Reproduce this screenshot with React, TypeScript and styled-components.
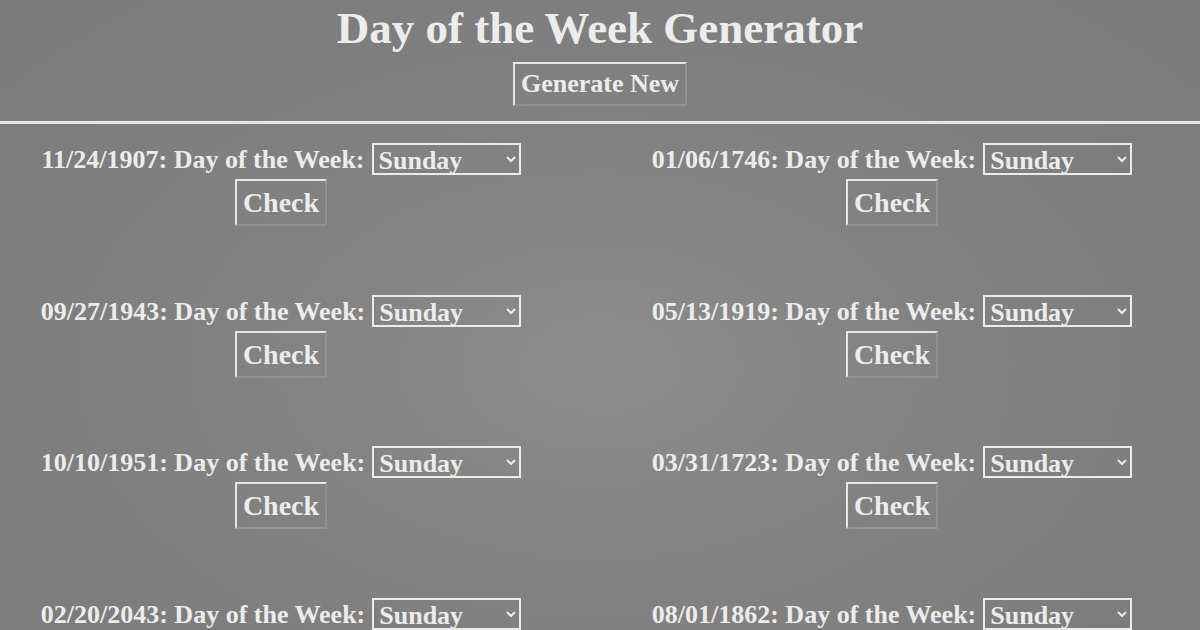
import React from "react";
import styled, { createGlobalStyle } from "styled-components";

const GlobalStyle = createGlobalStyle`
  html, body {
    margin: 0;
    padding: 0;
  }
  body {
    width: 1200px;
    height: 630px;
    overflow: hidden;
    background: radial-gradient(ellipse at 50% 58%, #8c8c8c 0%, #828282 40%, #7a7a7a 100%);
    font-family: "Liberation Serif", "Times New Roman", serif;
    color: #ececec;
  }
`;

const Page = styled.div`
  display: flex;
  flex-direction: column;
`;

const Header = styled.header`
  display: flex;
  flex-direction: column;
  align-items: center;
  padding-top: 4px;
  padding-bottom: 15px;
  border-bottom: 3px solid #e4e4e4;
`;

const Title = styled.h1`
  margin: 0;
  font-size: 45px;
  font-weight: bold;
  line-height: 49px;
  color: #ececec;
`;

const RaisedButton = styled.button<{ $size: number; $line: number }>`
  font-family: "Liberation Serif", "Times New Roman", serif;
  font-weight: bold;
  font-size: ${(p) => p.$size}px;
  line-height: ${(p) => p.$line}px;
  color: #ececec;
  background: transparent;
  border: 2px outset #e6e6e6;
  padding: 5px 6px;
  cursor: pointer;
`;

const GenerateButton = styled(RaisedButton)`
  margin-top: 9px;
`;

const Grid = styled.main`
  display: grid;
  grid-template-columns: 562px 616px;
  column-gap: 22px;
  row-gap: 68.5px;
  padding-top: 19px;
`;

const Item = styled.div`
  display: flex;
  flex-direction: column;
  align-items: center;
`;

const Line = styled.div`
  display: flex;
  align-items: center;
  gap: 7px;
  font-size: 26px;
  font-weight: bold;
  white-space: nowrap;
`;

const Label = styled.span`
  padding-top: 2px;
`;

const Select = styled.select`
  font-family: "Liberation Serif", "Times New Roman", serif;
  font-weight: bold;
  font-size: 26px;
  color: #ececec;
  background: transparent;
  border: 2px solid #ececec;
  border-radius: 0;
  width: 149px;
  height: 32px;
  padding: 0 0 0 1px;
  box-sizing: border-box;
  option {
    color: #000;
  }
`;

const CheckButton = styled(RaisedButton)`
  margin-top: 4px;
`;

const dates = [
  "11/24/1907",
  "01/06/1746",
  "09/27/1943",
  "05/13/1919",
  "10/10/1951",
  "03/31/1723",
  "02/20/2043",
  "08/01/1862",
];

const days = ["Sunday", "Monday", "Tuesday", "Wednesday", "Thursday", "Friday", "Saturday"];

export default function App() {
  return (
    <>
      <GlobalStyle />
      <Page>
        <Header>
          <Title>Day of the Week Generator</Title>
          <GenerateButton $size={26} $line={30}>
            Generate New
          </GenerateButton>
        </Header>
        <Grid>
          {dates.map((d) => (
            <Item key={d}>
              <Line>
                <Label>{d}: Day of the Week:</Label>
                <Select defaultValue="Sunday">
                  {days.map((day) => (
                    <option key={day} value={day}>
                      {day}
                    </option>
                  ))}
                </Select>
              </Line>
              <CheckButton $size={28} $line={33}>
                Check
              </CheckButton>
            </Item>
          ))}
        </Grid>
      </Page>
    </>
  );
}
